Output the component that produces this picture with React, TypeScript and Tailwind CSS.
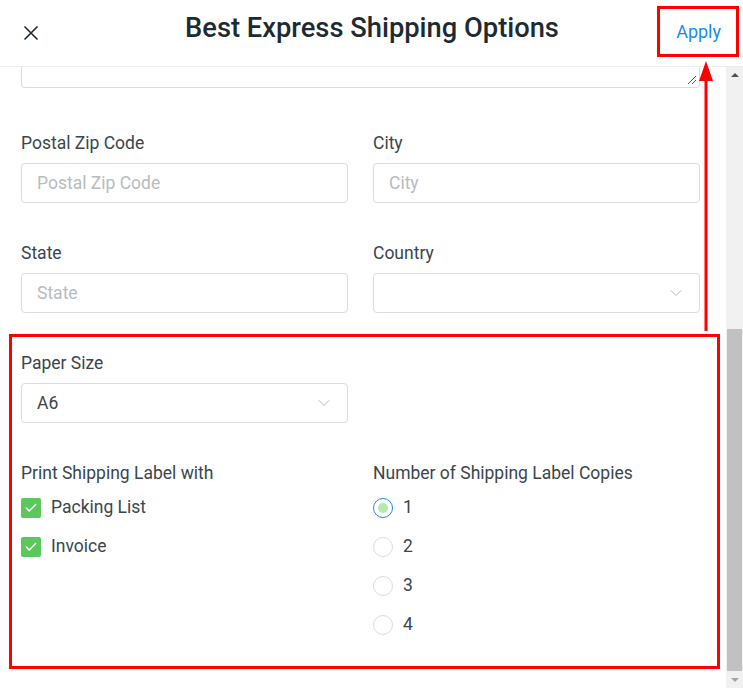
import { ChevronDown, Check } from "lucide-react";

const font = { fontFamily: "Roboto, 'Noto Sans', Arial, sans-serif" };

function Label({ children }: { children: React.ReactNode }) {
  return (
    <div className="h-5 text-[17.5px] leading-5 text-[#3a464e]">{children}</div>
  );
}

function TextField({ label, placeholder }: { label: string; placeholder: string }) {
  return (
    <div className="flex flex-col gap-[10px]">
      <Label>{label}</Label>
      <div className="flex h-10 items-center rounded border border-[#dcdcdc] px-[15px] text-[17.5px] text-[#b8bcbf]">
        {placeholder}
      </div>
    </div>
  );
}

function SelectField({ label, value }: { label: string; value?: string }) {
  return (
    <div className="flex flex-col gap-[10px]">
      <Label>{label}</Label>
      <div className="flex h-10 items-center justify-between rounded border border-[#dcdcdc] pl-[15px] pr-[13px] text-[17.5px] text-[#3a464e]">
        <span>{value}</span>
        <ChevronDown size={20} strokeWidth={1} className="text-[#a9a9a9]" />
      </div>
    </div>
  );
}

function CheckRow({ label }: { label: string }) {
  return (
    <div className="flex h-[39px] items-center gap-[10px]">
      <span className="flex h-5 w-5 items-center justify-center rounded-[2px] bg-[#5bc85b]">
        <Check size={14} strokeWidth={2.5} className="text-white" />
      </span>
      <span className="text-[17.5px] text-[#3a464e]">{label}</span>
    </div>
  );
}

function RadioRow({ label, checked }: { label: string; checked?: boolean }) {
  return (
    <div className="flex h-[39px] items-center gap-[10px]">
      <span
        className={
          checked
            ? "flex h-5 w-5 items-center justify-center rounded-full border border-[#1e88e5]"
            : "flex h-5 w-5 items-center justify-center rounded-full border border-[#dcdcdc]"
        }
      >
        {checked && <span className="h-[10px] w-[10px] rounded-full bg-[#b6e8b2]" />}
      </span>
      <span className="text-[17.5px] text-[#3a464e]">{label}</span>
    </div>
  );
}

export default function App() {
  return (
    <div className="relative h-[688px] w-[743px] overflow-hidden bg-white" style={font}>
      <header className="grid h-[67px] grid-cols-[1fr_auto_1fr] items-center border-b border-[#ececec] pl-[23px] pr-[22px]">
        <svg width="16" height="16" viewBox="0 0 16 16" className="text-[#1c2b33]">
          <path d="M1.5 1.5 L14.5 14.5 M14.5 1.5 L1.5 14.5" stroke="currentColor" strokeWidth="1.6" />
        </svg>
        <h1 className="pb-[9px] text-center text-[27.3px] font-medium text-[#1c2b33]">
          Best Express Shipping Options
        </h1>
        <button className="justify-self-end pb-[3px] text-[18px] text-[#1a8cf0]">Apply</button>
      </header>

      <div className="flex h-[621px]">
        <main className="flex-1 pl-[21px] pr-[26px]">
          <div className="relative h-[21px] rounded-b border-x border-b border-[#dcdcdc]">
            <svg className="absolute bottom-[2px] right-[2px]" width="10" height="10" viewBox="0 0 10 10">
              <path d="M9 1 L1 9 M9 5 L5 9" stroke="#555" strokeWidth="1" />
            </svg>
          </div>

          <div className="mt-[45px] grid grid-cols-2 gap-x-[25px] gap-y-10">
            <TextField label="Postal Zip Code" placeholder="Postal Zip Code" />
            <TextField label="City" placeholder="City" />
            <TextField label="State" placeholder="State" />
            <SelectField label="Country" />
            <SelectField label="Paper Size" value="A6" />
            <div />
            <div className="flex flex-col">
              <div className="mb-[5px]">
                <Label>Print Shipping Label with</Label>
              </div>
              <CheckRow label="Packing List" />
              <CheckRow label="Invoice" />
            </div>
            <div className="flex flex-col">
              <div className="mb-[5px]">
                <Label>Number of Shipping Label Copies</Label>
              </div>
              <RadioRow label="1" checked />
              <RadioRow label="2" />
              <RadioRow label="3" />
              <RadioRow label="4" />
            </div>
          </div>
        </main>

        {/* scrollbar */}
        <div className="flex w-[17px] flex-col items-center bg-[#f1f1f1]">
          <div className="flex h-[17px] w-full items-center justify-center">
            <span className="h-0 w-0 border-x-[4px] border-b-[4px] border-x-transparent border-b-[#505050]" />
          </div>
          <div className="mt-[245px] h-[343px] w-[15px] bg-[#c1c1c1]" />
          <div className="flex h-[17px] w-full items-center justify-center">
            <span className="h-0 w-0 border-x-[4px] border-t-[4px] border-x-transparent border-t-[#a3a3a3]" />
          </div>
        </div>
      </div>

      {/* annotations */}
      <div className="absolute left-[657px] top-[6px] h-[51px] w-[82px] border-[3px] border-[#ff0000]" />
      <svg className="absolute left-[698px] top-[60px]" width="16" height="272" viewBox="0 0 16 272">
        <polygon points="8,1 1,21 15,21" fill="#ff0000" />
        <rect x="6.5" y="20" width="3" height="251" fill="#ff0000" />
      </svg>
      <div className="absolute left-[9px] top-[334px] h-[335px] w-[711px] border-[3px] border-[#ff0000]" />
    </div>
  );
}
